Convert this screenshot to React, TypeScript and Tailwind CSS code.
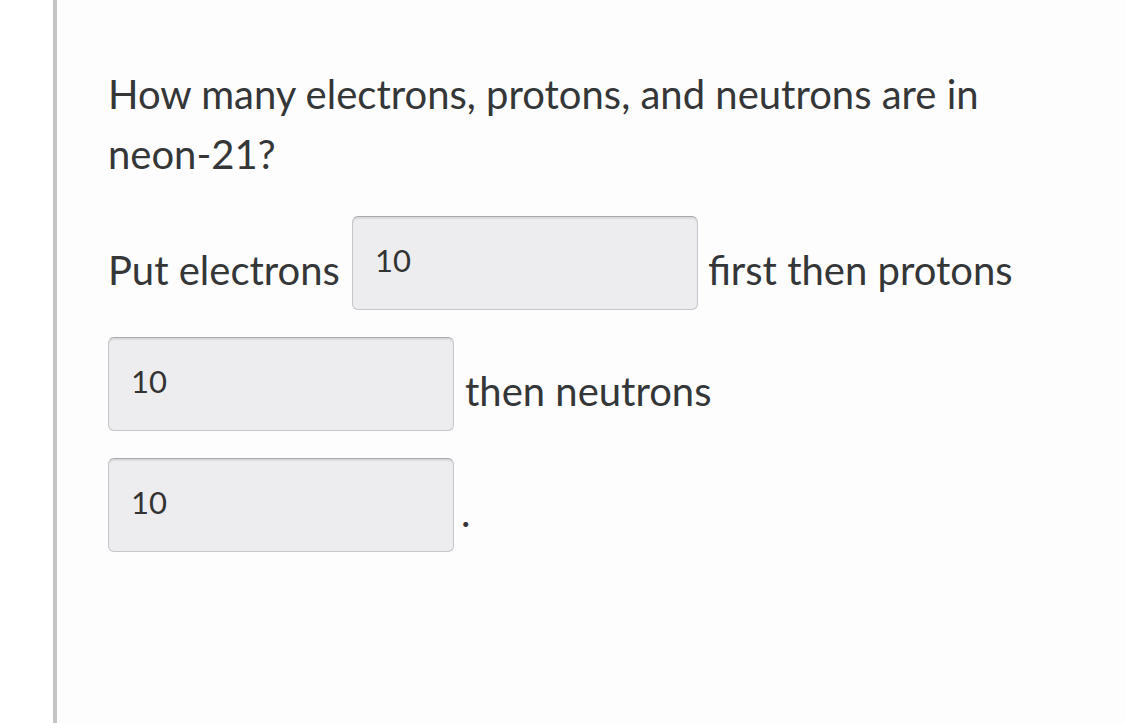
import React from "react";

function Box({ value }: { value: string }) {
  return (
    <div className="w-[346px] h-[94px] shrink-0 rounded-[6px] border border-[#c4c7cb] border-t-[#a4a7ab] shadow-[inset_0_2px_1px_rgba(0,0,0,0.08)] bg-[#ededef] flex items-center pl-[22px] pb-[5px] text-[31px] text-[#333]">
      {value}
    </div>
  );
}

export default function App() {
  return (
    <div
      className="w-[1125px] h-[723px] overflow-hidden flex bg-white text-[#343638]"
      style={{ fontFamily: "Lato, 'Open Sans', sans-serif" }}
    >
      <div className="w-[53px] shrink-0 bg-white" />
      <div className="w-[4px] shrink-0 bg-[#c4c4c4]" />
      <div className="flex-1 bg-[#fdfdfd] pl-[51px] pt-[64px]">
        <div className="text-[40px] leading-[60px] w-[920px]">
          How many electrons, protons, and neutrons are in neon-21?
        </div>
        <div className="mt-[32px] flex flex-col gap-[27px] text-[40px]">
          <div className="flex items-center">
            <span className="pt-[13px] mr-[12px]">Put electrons</span>
            <Box value="10" />
            <span className="pt-[13px] ml-[10px]">first then protons</span>
          </div>
          <div className="flex items-center">
            <Box value="10" />
            <span className="pt-[13px] ml-[11px]">then neutrons</span>
          </div>
          <div className="flex items-center">
            <Box value="10" />
            <span className="pt-[13px] ml-[7px]">.</span>
          </div>
        </div>
      </div>
    </div>
  );
}
